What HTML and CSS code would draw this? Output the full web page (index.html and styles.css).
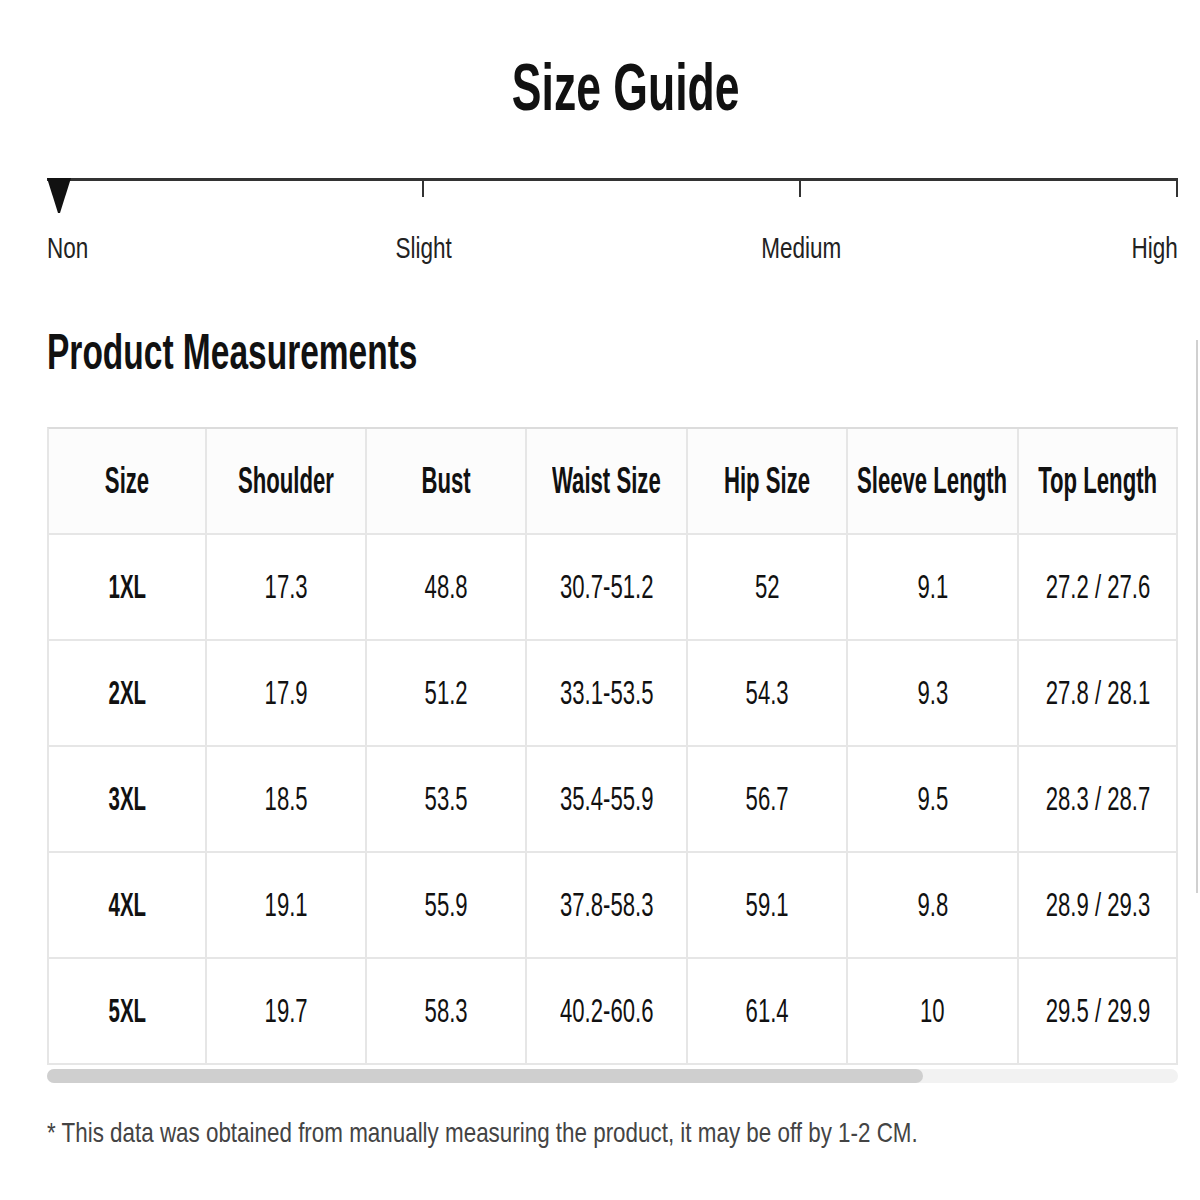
FILE: index.html
```html
<!DOCTYPE html>
<html lang="en">
<head>
<meta charset="utf-8">
<title>Size Guide</title>
<link rel="stylesheet" href="styles.css">
</head>
<body>
<div class="page">
  <h1 class="title"><span class="squeeze">Size Guide</span></h1>

  <div class="stretch">
    <div class="stretch-bar">
      <div class="seg"></div><div class="seg"></div><div class="seg"></div>
      <svg class="marker" width="24" height="36" viewBox="0 0 24 36"><polygon points="0,0 24,0 13,35 11,35" fill="#111"/></svg>
    </div>
    <div class="stretch-labels">
      <div class="lab lab-start"><span class="squeeze">Non</span></div>
      <div class="lab"><span class="squeeze">Slight</span></div>
      <div class="lab"><span class="squeeze">Medium</span></div>
      <div class="lab lab-end"><span class="squeeze">High</span></div>
    </div>
  </div>

  <h2 class="subtitle"><span class="squeeze">Product Measurements</span></h2>

  <div class="table">
    <div class="cell head"><span class="squeeze">Size</span></div>
    <div class="cell head"><span class="squeeze">Shoulder</span></div>
    <div class="cell head"><span class="squeeze">Bust</span></div>
    <div class="cell head"><span class="squeeze">Waist Size</span></div>
    <div class="cell head"><span class="squeeze">Hip Size</span></div>
    <div class="cell head"><span class="squeeze">Sleeve Length</span></div>
    <div class="cell head"><span class="squeeze">Top Length</span></div>

    <div class="cell size"><span class="squeeze">1XL</span></div>
    <div class="cell"><span class="squeeze">17.3</span></div>
    <div class="cell"><span class="squeeze">48.8</span></div>
    <div class="cell"><span class="squeeze">30.7-51.2</span></div>
    <div class="cell"><span class="squeeze">52</span></div>
    <div class="cell"><span class="squeeze">9.1</span></div>
    <div class="cell"><span class="squeeze">27.2 / 27.6</span></div>

    <div class="cell size"><span class="squeeze">2XL</span></div>
    <div class="cell"><span class="squeeze">17.9</span></div>
    <div class="cell"><span class="squeeze">51.2</span></div>
    <div class="cell"><span class="squeeze">33.1-53.5</span></div>
    <div class="cell"><span class="squeeze">54.3</span></div>
    <div class="cell"><span class="squeeze">9.3</span></div>
    <div class="cell"><span class="squeeze">27.8 / 28.1</span></div>

    <div class="cell size"><span class="squeeze">3XL</span></div>
    <div class="cell"><span class="squeeze">18.5</span></div>
    <div class="cell"><span class="squeeze">53.5</span></div>
    <div class="cell"><span class="squeeze">35.4-55.9</span></div>
    <div class="cell"><span class="squeeze">56.7</span></div>
    <div class="cell"><span class="squeeze">9.5</span></div>
    <div class="cell"><span class="squeeze">28.3 / 28.7</span></div>

    <div class="cell size"><span class="squeeze">4XL</span></div>
    <div class="cell"><span class="squeeze">19.1</span></div>
    <div class="cell"><span class="squeeze">55.9</span></div>
    <div class="cell"><span class="squeeze">37.8-58.3</span></div>
    <div class="cell"><span class="squeeze">59.1</span></div>
    <div class="cell"><span class="squeeze">9.8</span></div>
    <div class="cell"><span class="squeeze">28.9 / 29.3</span></div>

    <div class="cell size"><span class="squeeze">5XL</span></div>
    <div class="cell"><span class="squeeze">19.7</span></div>
    <div class="cell"><span class="squeeze">58.3</span></div>
    <div class="cell"><span class="squeeze">40.2-60.6</span></div>
    <div class="cell"><span class="squeeze">61.4</span></div>
    <div class="cell"><span class="squeeze">10</span></div>
    <div class="cell"><span class="squeeze">29.5 / 29.9</span></div>
  </div>

  <div class="hscroll"><div class="hscroll-thumb"></div></div>

  <p class="note"><span class="squeeze">* This data was obtained from manually measuring the product, it may be off by 1-2 CM.</span></p>

  <div class="vscroll"></div>
</div>
</body>
</html>
```

FILE: styles.css
```css
html, body {
  margin: 0;
  padding: 0;
  background: #ffffff;
}

.page {
  position: relative;
  width: 1200px;
  min-height: 1200px;
  box-sizing: border-box;
  padding: 54px 22px 0 47px;
  font-family: "Liberation Sans", Arial, sans-serif;
  color: #111111;
}

.squeeze {
  display: inline-block;
  white-space: nowrap;
  transform-origin: center;
}

/* Title */
.title {
  margin: 0;
  padding-left: 27px;
  text-align: center;
  font-size: 66px;
  line-height: 66px;
  font-weight: bold;
}
.title .squeeze { transform: scaleX(0.675); }

/* Stretch scale */
.stretch { margin-top: 58px; }

.stretch-bar {
  position: relative;
  display: grid;
  grid-template-columns: 377px 377px 377px;
}
.seg {
  height: 16px;
  border-top: 3px solid #333333;
  border-right: 2px solid #333333;
}
.marker {
  position: absolute;
  left: 0;
  top: 0;
}

.stretch-labels {
  display: flex;
  justify-content: space-between;
  margin-top: 36px;
  width: 1131px;
  font-size: 30px;
  line-height: 30px;
  color: #222222;
}
.lab {
  width: 0;
  display: flex;
  justify-content: center;
}
.lab .squeeze { transform: scaleX(0.75); }
.lab-start { justify-content: flex-start; }
.lab-start .squeeze { transform-origin: left; }
.lab-end { justify-content: flex-end; }
.lab-end .squeeze { transform-origin: right; }

/* Subtitle */
.subtitle {
  margin: 64px 0 0 0;
  font-size: 50px;
  line-height: 50px;
  font-weight: bold;
}
.subtitle .squeeze {
  transform-origin: left;
  transform: scaleX(0.67);
}

/* Table */
.table {
  margin-top: 50px;
  display: grid;
  grid-template-columns: 158px 160px 160px 161px 160px 171px 159px;
  border-left: 2px solid #e6e6e6;
  border-top: 2px solid #dcdcdc;
  width: 1131px;
  box-sizing: border-box;
}
.cell {
  height: 106px;
  box-sizing: border-box;
  border-right: 2px solid #e6e6e6;
  border-bottom: 2px solid #e6e6e6;
  display: flex;
  align-items: center;
  justify-content: center;
  font-size: 33px;
  color: #111111;
}
.cell .squeeze { transform: scaleX(0.67); }
.cell.head {
  background: #fcfcfc;
  font-size: 36px;
  font-weight: bold;
  color: #111111;
}
.cell.head .squeeze { transform: scaleX(0.615); }
.cell.size {
  font-weight: bold;
}
.cell.size .squeeze { transform: scaleX(0.62); }

/* Horizontal scrollbar */
.hscroll {
  margin-top: 4px;
  width: 1131px;
  height: 14px;
  border-radius: 7px;
  background: #f2f2f2;
}
.hscroll-thumb {
  width: 876px;
  height: 14px;
  border-radius: 7px;
  background: #cfcfcf;
}

/* Note */
.note {
  margin: 36px 0 0 0;
  font-size: 28px;
  line-height: 28px;
  color: #444444;
}
.note .squeeze {
  transform-origin: left;
  transform: scaleX(0.80);
}

/* Outer vertical scrollbar edge */
.vscroll {
  position: absolute;
  right: 2px;
  top: 340px;
  width: 2px;
  height: 553px;
  background: #d0d0d0;
}
```
